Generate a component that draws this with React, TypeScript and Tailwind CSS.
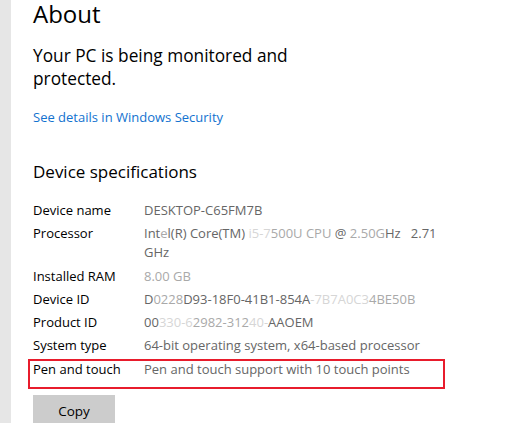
import React from 'react';

type Spec = { label: string; value: React.ReactNode };

// faded = parts of the value that were smudged out in the screenshot
const Faded = ({ children, light }: { children: React.ReactNode; light?: boolean }) => (
  <span className={light ? 'text-[#d6d6d6]' : 'text-[#a9a9a9]'}>{children}</span>
);

const specs: Spec[] = [
  { label: 'Device name', value: 'DESKTOP-C65FM7B' },
  {
    label: 'Processor',
    value: (
      <>
        Int<Faded>e</Faded>l(R) Core(TM) <Faded light>i5-7</Faded>
        <Faded>500U CPU</Faded> @ <Faded>2.50G</Faded>
        <span className="whitespace-pre">Hz   2.71</span>
        <br />
        GHz
      </>
    ),
  },
  { label: 'Installed RAM', value: <Faded>8.00 GB</Faded> },
  {
    label: 'Device ID',
    value: (
      <>
        D<Faded>0228</Faded>D93-18F0-41B1-854A<Faded light>-7B7A0C3</Faded>
        <Faded>4BE50B</Faded>
      </>
    ),
  },
  {
    label: 'Product ID',
    value: (
      <>
        00<Faded light>330-6</Faded>
        <Faded>2982-312</Faded>
        <Faded light>40-</Faded>AAOEM
      </>
    ),
  },
  { label: 'System type', value: '64-bit operating system, x64-based processor' },
  { label: 'Pen and touch', value: 'Pen and touch support with 10 touch points' },
];

export default function App() {
  return (
    <div className="flex h-screen overflow-hidden bg-white font-['Open_Sans',sans-serif] text-black">
      <div className="w-[11px] shrink-0 bg-[#e6e6e6]" />

      <main className="flex flex-col pl-[22px]">
        <h1 className="text-[24px] leading-[28px] font-normal">About</h1>

        <p className="mt-[16px] w-[270px] text-[17.3px] leading-[23px]">
          Your PC is being monitored and protected.
        </p>

        <a href="#" className="mt-[17px] text-[13px] leading-[20px] text-[#1272cf]">
          See details in Windows Security
        </a>

        <h2 className="mt-[33px] text-[17px] leading-[24px] font-normal">Device specifications</h2>

        <div className="mt-[17px] flex flex-col gap-[4.25px] text-[13px] leading-[19px]">
          {specs.map((s) => (
            <div key={s.label} className="relative flex">
              <span className="w-[111px] shrink-0">{s.label}</span>
              <span className="text-[#666666]">{s.value}</span>
              {s.label === 'Pen and touch' && (
                <span className="pointer-events-none absolute -top-[1px] -bottom-[10.5px] -left-[5px] w-[417px] border-2 border-[#e81c2c]" />
              )}
            </div>
          ))}
        </div>

        <button
          type="button"
          className="mt-[16px] h-[32px] w-[82px] shrink-0 bg-[#cccccc] text-[13.5px] leading-[32px] text-black"
        >
          Copy
        </button>
      </main>
    </div>
  );
}
